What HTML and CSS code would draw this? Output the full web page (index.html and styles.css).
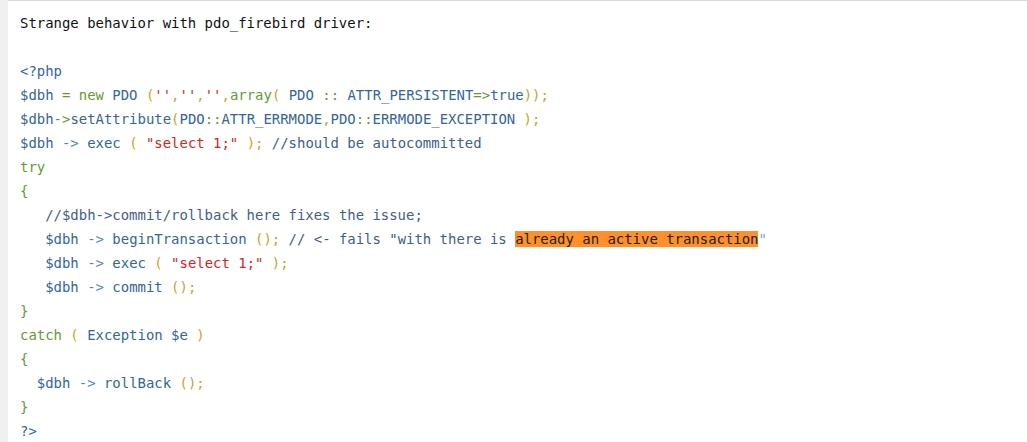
FILE: index.html
```html
<!DOCTYPE html>
<html>
<head>
<meta charset="utf-8">
<link rel="stylesheet" href="styles.css">
</head>
<body>
<div class="note">
<div class="code"><span class="txt">Strange behavior with pdo_firebird driver:</span>

<span class="d">&lt;?php</span>
<span class="d">$dbh </span><span class="k">= new </span><span class="d">PDO </span><span class="p">(</span><span class="s">''</span><span class="p">,</span><span class="s">''</span><span class="p">,</span><span class="s">''</span><span class="p">,</span><span class="k">array</span><span class="p">( </span><span class="d">PDO </span><span class="k">:: </span><span class="d">ATTR_PERSISTENT</span><span class="k">=&gt;</span><span class="d">true</span><span class="p">));</span>
<span class="d">$dbh</span><span class="k">-&gt;</span><span class="d">setAttribute</span><span class="p">(</span><span class="d">PDO</span><span class="k">::</span><span class="d">ATTR_ERRMODE</span><span class="p">,</span><span class="d">PDO</span><span class="k">::</span><span class="d">ERRMODE_EXCEPTION </span><span class="p">);</span>
<span class="d">$dbh </span><span class="o">-&gt; </span><span class="d">exec </span><span class="p">( </span><span class="s">"select 1;" </span><span class="p">); </span><span class="c">//should be autocommitted</span>
<span class="k">try</span>
<span class="k">{</span>
   <span class="c">//$dbh-&gt;commit/rollback here fixes the issue;</span>
   <span class="d">$dbh </span><span class="o">-&gt; </span><span class="d">beginTransaction </span><span class="p">(); </span><span class="c">// &lt;- fails "with there is </span><span class="hl">already an active transaction</span><span class="q">"</span>
   <span class="d">$dbh </span><span class="o">-&gt; </span><span class="d">exec </span><span class="p">( </span><span class="s">"select 1;" </span><span class="p">);</span>
   <span class="d">$dbh </span><span class="o">-&gt; </span><span class="d">commit </span><span class="p">();</span>
<span class="k">}</span>
<span class="k">catch </span><span class="p">( </span><span class="d">Exception $e </span><span class="p">)</span>
<span class="k">{</span>
  <span class="d">$dbh </span><span class="o">-&gt; </span><span class="d">rollBack </span><span class="p">();</span>
<span class="k">}</span>
<span class="d">?&gt;</span></div>
</div>
</body>
</html>
```
FILE: styles.css
```css
html, body {
  margin: 0;
  padding: 0;
  height: 100%;
}
body {
  background: #f0f0f0;
}
.note {
  margin-left: 8px;
  min-height: 100%;
  box-sizing: border-box;
  background: #fff;
  border-top: 1px solid #d9d9d9;
  padding: 10px 12px 0 12px;
}
.code {
  font-family: "DejaVu Sans Mono", "Liberation Mono", monospace;
  font-size: 13.95px;
  line-height: 24px;
  white-space: pre;
  color: #369;
}
.txt { color: #111; }
.d { color: #369; }
.k { color: #693; }
.o { color: #58a; }
.p { color: #c9a227; }
.s { color: #d22; }
.c { color: #3f6088; }
.q { color: #8aa4bd; }
.hl {
  background: #ff8f2a;
  color: #222;
}
```
